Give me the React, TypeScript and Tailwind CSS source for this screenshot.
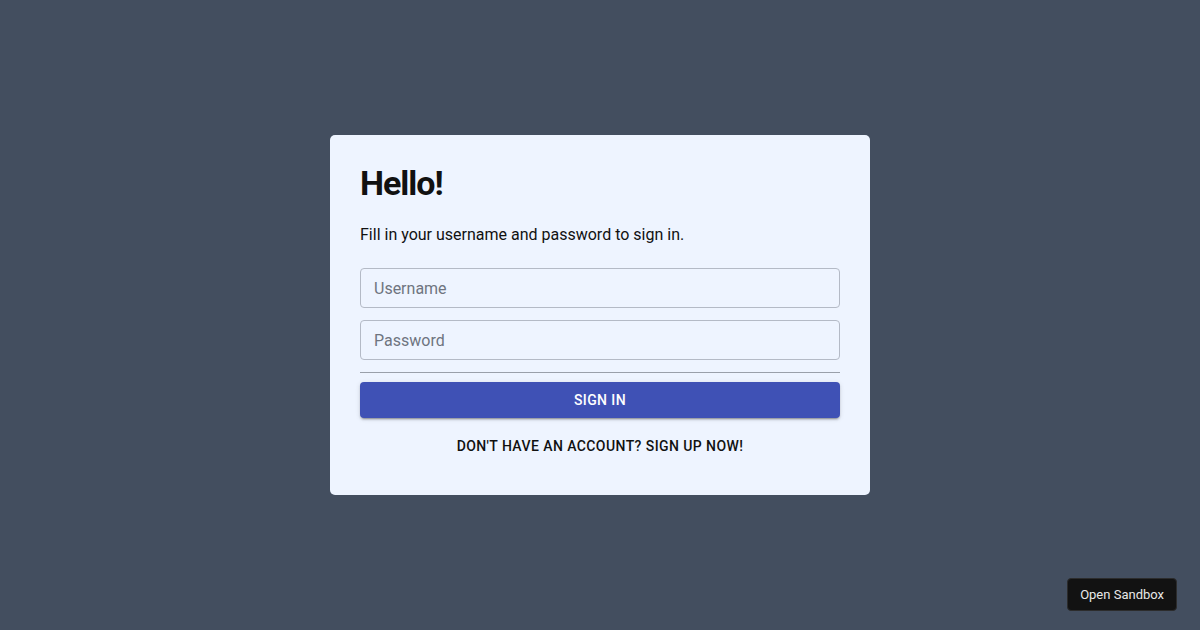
import { useState } from 'react'

export default function App() {
  const [username, setUsername] = useState('')
  const [password, setPassword] = useState('')

  return (
    <div className="min-h-[630px] w-full bg-[#434e5f] flex items-center justify-center font-['Roboto',sans-serif]">
      <form
        onSubmit={(e) => e.preventDefault()}
        className="w-[540px] bg-[#eef4ff] rounded-[5px] px-[30px] pt-[30px] pb-[30px] flex flex-col"
      >
        <h1 className="text-[34px] leading-[36px] font-bold tracking-[-0.03em] text-[#111111]">Hello!</h1>
        <p className="mt-[22px] text-base leading-6 text-[#111111]">
          Fill in your username and password to sign in.
        </p>

        <input
          value={username}
          onChange={(e) => setUsername(e.target.value)}
          placeholder="Username"
          className="mt-[21px] h-10 w-full rounded-[4px] border border-[#b4bac6] bg-transparent px-[13px] text-base text-[#111111] placeholder:text-[#6f7480] outline-none"
        />
        <input
          type="password"
          value={password}
          onChange={(e) => setPassword(e.target.value)}
          placeholder="Password"
          className="mt-3 h-10 w-full rounded-[4px] border border-[#b4bac6] bg-transparent px-[13px] text-base text-[#111111] placeholder:text-[#6f7480] outline-none"
        />

        <hr className="mt-3 border-0 border-t border-[#9aa0aa]" />

        <button
          type="submit"
          className="mt-[9px] h-9 w-full rounded-[4px] bg-[#3f51b5] text-white text-sm font-medium uppercase tracking-[0.03em] shadow-[0_3px_1px_-2px_rgba(0,0,0,0.2),0_2px_2px_0_rgba(0,0,0,0.14),0_1px_5px_0_rgba(0,0,0,0.12)]"
        >
          Sign In
        </button>

        <button
          type="button"
          className="mt-[10px] self-center px-2 py-[6px] text-sm leading-[24.5px] font-medium uppercase tracking-[0.03em] text-[#111111] rounded-[4px]"
        >
          Don't have an account? Sign up now!
        </button>
      </form>

      <div className="fixed right-[23px] bottom-[19px] h-[33px] px-3 flex items-center rounded-[4px] bg-[#121212] border border-[#2c2c2c] text-[13px] text-[#e8e8e8] font-['Roboto',sans-serif]">
        Open Sandbox
      </div>
    </div>
  )
}
